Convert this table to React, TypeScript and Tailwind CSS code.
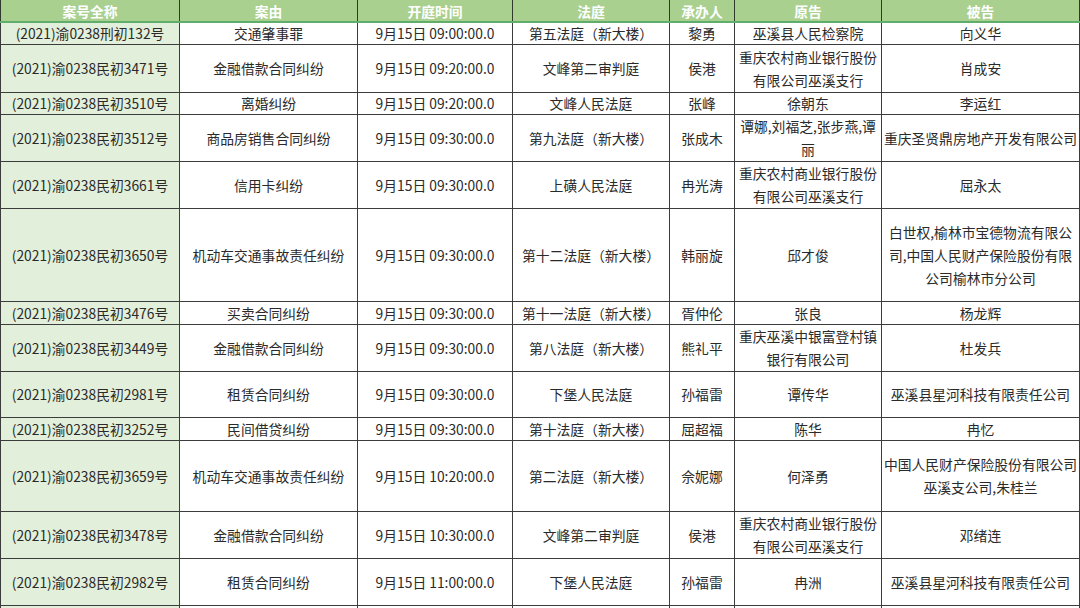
type Row = {
  h: number
  no: string
  reason: string
  time: string
  court: string
  judge: string
  plaintiff: string[]
  defendant: string[]
}

const rows: Row[] = [
  { h: 22, no: '(2021)渝0238刑初132号', reason: '交通肇事罪', time: '9月15日 09:00:00.0', court: '第五法庭（新大楼）', judge: '黎勇', plaintiff: ['巫溪县人民检察院'], defendant: ['向义华'] },
  { h: 48, no: '(2021)渝0238民初3471号', reason: '金融借款合同纠纷', time: '9月15日 09:20:00.0', court: '文峰第二审判庭', judge: '侯港', plaintiff: ['重庆农村商业银行股份', '有限公司巫溪支行'], defendant: ['肖成安'] },
  { h: 22, no: '(2021)渝0238民初3510号', reason: '离婚纠纷', time: '9月15日 09:20:00.0', court: '文峰人民法庭', judge: '张峰', plaintiff: ['徐朝东'], defendant: ['李运红'] },
  { h: 47, no: '(2021)渝0238民初3512号', reason: '商品房销售合同纠纷', time: '9月15日 09:30:00.0', court: '第九法庭（新大楼）', judge: '张成木', plaintiff: ['谭娜,刘福芝,张步燕,谭', '丽'], defendant: ['重庆圣贤鼎房地产开发有限公司'] },
  { h: 46, no: '(2021)渝0238民初3661号', reason: '信用卡纠纷', time: '9月15日 09:30:00.0', court: '上磺人民法庭', judge: '冉光涛', plaintiff: ['重庆农村商业银行股份', '有限公司巫溪支行'], defendant: ['屈永太'] },
  { h: 93, no: '(2021)渝0238民初3650号', reason: '机动车交通事故责任纠纷', time: '9月15日 09:30:00.0', court: '第十二法庭（新大楼）', judge: '韩丽旋', plaintiff: ['邱才俊'], defendant: ['白世权,榆林市宝德物流有限公', '司,中国人民财产保险股份有限', '公司榆林市分公司'] },
  { h: 23, no: '(2021)渝0238民初3476号', reason: '买卖合同纠纷', time: '9月15日 09:30:00.0', court: '第十一法庭（新大楼）', judge: '胥仲伦', plaintiff: ['张良'], defendant: ['杨龙辉'] },
  { h: 47, no: '(2021)渝0238民初3449号', reason: '金融借款合同纠纷', time: '9月15日 09:30:00.0', court: '第八法庭（新大楼）', judge: '熊礼平', plaintiff: ['重庆巫溪中银富登村镇', '银行有限公司'], defendant: ['杜发兵'] },
  { h: 46, no: '(2021)渝0238民初2981号', reason: '租赁合同纠纷', time: '9月15日 09:30:00.0', court: '下堡人民法庭', judge: '孙福雷', plaintiff: ['谭传华'], defendant: ['巫溪县星河科技有限责任公司'] },
  { h: 23, no: '(2021)渝0238民初3252号', reason: '民间借贷纠纷', time: '9月15日 09:30:00.0', court: '第十法庭（新大楼）', judge: '屈超福', plaintiff: ['陈华'], defendant: ['冉忆'] },
  { h: 71, no: '(2021)渝0238民初3659号', reason: '机动车交通事故责任纠纷', time: '9月15日 10:20:00.0', court: '第二法庭（新大楼）', judge: '佘妮娜', plaintiff: ['何泽勇'], defendant: ['中国人民财产保险股份有限公司', '巫溪支公司,朱桂兰'] },
  { h: 46, no: '(2021)渝0238民初3478号', reason: '金融借款合同纠纷', time: '9月15日 10:30:00.0', court: '文峰第二审判庭', judge: '侯港', plaintiff: ['重庆农村商业银行股份', '有限公司巫溪支行'], defendant: ['邓绪连'] },
  { h: 47, no: '(2021)渝0238民初2982号', reason: '租赁合同纠纷', time: '9月15日 11:00:00.0', court: '下堡人民法庭', judge: '孙福雷', plaintiff: ['冉洲'], defendant: ['巫溪县星河科技有限责任公司'] },
]

const headers = ['案号全称', '案由', '开庭时间', '法庭', '承办人', '原告', '被告']
const widths = [179, 178, 155, 157, 65, 147, 198]

function Lines({ lines }: { lines: string[] }) {
  return (
    <div className={lines.length > 1 ? 'leading-[23px]' : ''}>
      {lines.map((l, i) => (
        <div key={i}>{l}</div>
      ))}
    </div>
  )
}

export default function App() {
  const cell = 'border border-[#3c3c3c] p-0 text-center align-middle whitespace-nowrap'
  return (
    <div
      className="w-[1080px] h-[608px] overflow-hidden bg-white text-[13.8px] leading-[21px] text-[#2a2a2a]"
      style={{ fontFamily: '"Noto Sans CJK SC", "Noto Sans", sans-serif' }}
    >
      <table className="table-fixed border-collapse w-[1079px]">
        <colgroup>
          {widths.map((w, i) => (
            <col key={i} style={{ width: w }} />
          ))}
        </colgroup>
        <thead>
          <tr className="h-[22px] bg-[#a9d08e]">
            {headers.map((h) => (
              <th
                key={h}
                className="border-x border-x-[#2f3b2a] border-t-0 border-b-2 border-b-[#5fae6c] p-0 text-center align-middle font-bold leading-[20px] text-white"
              >
                {h}
              </th>
            ))}
          </tr>
        </thead>
        <tbody>
          {rows.map((r, i) => (
            <tr key={i} style={{ height: r.h }}>
              <td className={`${cell} bg-[#e2efda]`}>{r.no}</td>
              <td className={cell}>{r.reason}</td>
              <td className={cell}>{r.time}</td>
              <td className={cell}>{r.court}</td>
              <td className={cell}>{r.judge}</td>
              <td className={cell}>
                <Lines lines={r.plaintiff} />
              </td>
              <td className={cell}>
                <Lines lines={r.defendant} />
              </td>
            </tr>
          ))}
          <tr className="h-[23px]">
            {widths.map((_, i) => (
              <td key={i} className={i === 0 ? `${cell} bg-[#e2efda]` : cell} />
            ))}
          </tr>
        </tbody>
      </table>
    </div>
  )
}
